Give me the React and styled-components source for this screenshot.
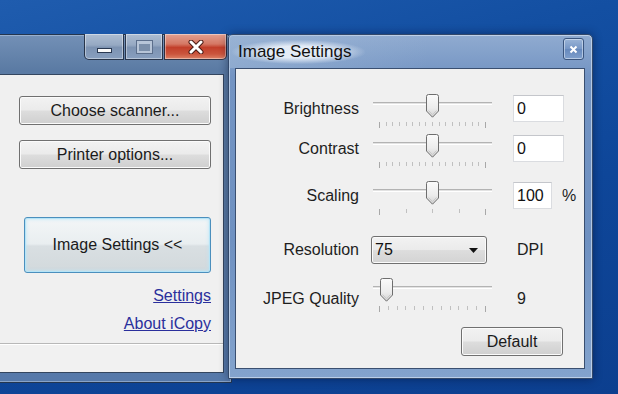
import React from 'react';
import styled, { createGlobalStyle } from 'styled-components';

const GlobalStyle = createGlobalStyle`
  html, body {
    margin: 0;
    padding: 0;
  }
  body {
    width: 618px;
    height: 394px;
    overflow: hidden;
    font-family: "Liberation Sans", Arial, sans-serif;
  }
`;

const Desktop = styled.div`
  position: relative;
  width: 618px;
  height: 394px;
  overflow: hidden;
  background: linear-gradient(165deg, #1f5cae 0%, #134fa2 30%, #0e4699 60%, #0c3f8f 100%);
`;

/* ---------- main iCopy window (partly off screen) ---------- */

const MainWindow = styled.div`
  position: absolute;
  left: -20px;
  top: 34px;
  width: 252px;
  height: 349px;
  box-sizing: border-box;
  display: flex;
  flex-direction: column;
  border: 1px solid #24364f;
  border-radius: 6px 6px 0 0;
  background: linear-gradient(180deg, #7390b6 0%, #5b7ba4 10%, #597aa3 60%, #5679aa 100%);
  box-shadow: inset 0 0 0 1px rgba(200, 215, 235, 0.45);
`;

const MainTitleBar = styled.div`
  height: 39px;
  display: flex;
  justify-content: flex-end;
  align-items: flex-start;
  padding-right: 4px;
`;

const CaptionGroup = styled.div`
  display: flex;
  gap: 1px;
  margin-top: -1px;
`;

const CaptionButton = styled.div`
  width: ${p => p.$w}px;
  height: 26px;
  box-sizing: border-box;
  display: flex;
  align-items: center;
  justify-content: center;
  border: 1px solid rgba(28, 40, 62, 0.9);
  border-top: none;
  border-radius: ${p => p.$radius || '0'};
  box-shadow: inset 0 0 0 1px rgba(255, 255, 255, 0.4);
  background: ${p => p.$close
    ? 'linear-gradient(180deg, #e2a091 0%, #d57864 40%, #c23f2a 54%, #cb553d 80%, #dd8266 100%)'
    : 'linear-gradient(180deg, #adbdd2 0%, #96a9c3 44%, #7d93b2 54%, #889fbf 100%)'};
`;

const MinGlyph = styled.span`
  width: 15px;
  height: 5px;
  box-sizing: border-box;
  margin-top: 7px;
  background: #fafafa;
  border: 1px solid #2a3952;
`;

const MaxGlyph = styled.span`
  width: 15px;
  height: 12px;
  box-sizing: border-box;
  border: 2px solid #b7c5d8;
  border-top-width: 3px;
  background: #7b8faa;
  box-shadow: 0 0 0 1px #5c6f8c;
`;

const MainClient = styled.div`
  flex: 1;
  margin: 0 7px 9px 7px;
  display: flex;
  flex-direction: column;
  background: #f0f0f0;
  border: 1px solid #34465f;
`;

const ButtonPanel = styled.div`
  flex: 1;
  display: flex;
  flex-direction: column;
  align-items: flex-end;
  padding: 21px 12px 0 0;
`;

const WinButton = styled.div`
  width: ${p => p.$w}px;
  height: ${p => p.$h}px;
  margin-top: ${p => p.$mt || 0}px;
  box-sizing: border-box;
  display: flex;
  align-items: center;
  justify-content: center;
  border: 1px solid ${p => (p.$focused ? '#4b8fbd' : '#707070')};
  border-radius: 3px;
  background: ${p => p.$focused
    ? 'linear-gradient(180deg, #f3f6f7 0%, #e9eef0 48%, #d9dfe2 52%, #d2d9dc 100%)'
    : 'linear-gradient(180deg, #f2f2f2 0%, #ebebeb 48%, #dddddd 52%, #cfcfcf 100%)'};
  box-shadow: ${p => p.$focused
    ? 'inset 0 0 0 1px #b5e4f7, inset 0 0 3px 2px rgba(181, 228, 247, 0.55)'
    : 'inset 0 0 0 1px #fbfbfb'};
  font-size: 16px;
  color: #1b1b1b;
`;

const LinkLabel = styled.span`
  margin-top: ${p => p.$mt}px;
  font-size: 16px;
  line-height: 20px;
  color: #2a2f9c;
  text-decoration: underline;
  cursor: pointer;
`;

const StatusStrip = styled.div`
  height: 28px;
  border-top: 1px solid #b8b8b8;
  box-shadow: inset 0 1px 0 #ffffff;
  background: #f1f1f1;
`;

/* ---------- Image Settings tool window ---------- */

const ToolWindow = styled.div`
  position: absolute;
  left: 228px;
  top: 34px;
  width: 365px;
  height: 345px;
  box-sizing: border-box;
  display: flex;
  flex-direction: column;
  border: 1px solid #32486a;
  border-radius: 5px 5px 0 0;
  background: linear-gradient(180deg, #90abd0 0%, #7394c3 12%, #6f91c1 60%, #83a3cd 100%);
  box-shadow: 0 0 10px rgba(0, 10, 40, 0.45), inset 0 0 0 1px rgba(225, 235, 248, 0.6);
`;

const ToolTitleBar = styled.div`
  height: 33px;
  display: flex;
  align-items: center;
  justify-content: space-between;
  padding: 0 8px 0 3px;
  background: linear-gradient(90deg, rgba(160, 185, 215, 0.55), rgba(110, 145, 195, 0) 55%);
`;

const ToolTitle = styled.span`
  padding: 2px 14px 2px 6px;
  font-size: 17px;
  color: #111;
  background: radial-gradient(ellipse at 50% 50%, rgba(232, 239, 248, 0.95) 35%, rgba(232, 239, 248, 0) 72%);
`;

const ToolClose = styled.div`
  width: 21px;
  height: 22px;
  margin-top: -5px;
  box-sizing: border-box;
  display: flex;
  align-items: center;
  justify-content: center;
  border: 1px solid #3b557d;
  border-radius: 3px;
  background: linear-gradient(180deg, #9ab4d7 0%, #7797c6 48%, #6689bd 52%, #7f9fcc 100%);
  box-shadow: inset 0 0 0 1px rgba(230, 238, 250, 0.55);
`;

const ToolClient = styled.div`
  flex: 1;
  margin: 0 7px 9px 6px;
  display: flex;
  flex-direction: column;
  padding-top: 26px;
  background: #f0f0f0;
  border: 1px solid #3a4f70;
`;

const Row = styled.div`
  display: grid;
  grid-template-columns: 135px 142px 1fr;
  align-items: center;
  height: ${p => p.$h || 27}px;
  margin-top: ${p => p.$mt || 0}px;
`;

const Label = styled.span`
  padding-right: 12px;
  text-align: right;
  font-size: 16px;
  color: #1e1e1e;
  white-space: nowrap;
`;

const SliderBox = styled.div`
  position: relative;
  align-self: start;
  width: 123px;
  height: 27px;
  margin-top: ${p => -(p.$lift || 0)}px;
  padding-top: 7px;
  box-sizing: border-box;
`;

const Track = styled.div`
  height: 3px;
  margin: 0 2px;
  box-sizing: border-box;
  border-top: 1px solid #b3b3b3;
  border-bottom: 1px solid #ffffff;
  background: #e2e2e2;
`;

const Ticks = styled.div`
  display: flex;
  justify-content: space-between;
  align-items: flex-start;
  margin-top: 17px;
  padding: 0 8px 0 8px;
`;

const Tick = styled.span`
  width: 1px;
  height: ${p => (p.$end ? 6 : 4)}px;
  background: ${p => (p.$end ? '#a8a8a8' : '#c0c0c0')};
`;

const ThumbMark = styled.svg`
  position: absolute;
  top: -1px;
  display: block;
`;

const ValueCell = styled.div`
  display: flex;
  align-items: center;
`;

const TextBox = styled.div`
  width: ${p => p.$w}px;
  height: 27px;
  box-sizing: border-box;
  padding-left: 3px;
  border: 1px solid #dadce0;
  border-top-color: #c4c6cb;
  background: #ffffff;
  font-size: 16px;
  line-height: 25px;
  color: #111;
`;

const ValueText = styled.span`
  padding-left: ${p => p.$pl || 0}px;
  font-size: 16px;
  color: #1e1e1e;
`;

const Combo = styled.div`
  width: 116px;
  height: 28px;
  box-sizing: border-box;
  display: flex;
  align-items: center;
  justify-content: space-between;
  padding: 0 8px 0 3px;
  border: 1px solid #707070;
  border-radius: 3px;
  background: linear-gradient(180deg, #f2f2f2 0%, #ebebeb 48%, #dddddd 52%, #d3d3d3 100%);
  box-shadow: inset 0 0 0 1px #fbfbfb;
  font-size: 16px;
  color: #111;
`;

const Footer = styled.div`
  display: flex;
  justify-content: flex-end;
  padding-right: 21px;
  margin-top: 15px;
`;

const Thumb = ({ value }) => (
  <ThumbMark style={{ left: 2 + Math.round(value * 106) }} width="13" height="24" viewBox="0 0 13 24">
    <defs>
      <linearGradient id="thumbFill" x1="0" y1="0" x2="0" y2="1">
        <stop offset="0" stopColor="#fbfbfb" />
        <stop offset="0.6" stopColor="#ececec" />
        <stop offset="1" stopColor="#d2d2d2" />
      </linearGradient>
    </defs>
    <path
      d="M0.5 2.5 Q0.5 0.5 2.5 0.5 H10.5 Q12.5 0.5 12.5 2.5 V17 L6.5 23.2 L0.5 17 Z"
      fill="url(#thumbFill)"
      stroke="#6e6e6e"
    />
    <path d="M2.5 16.5 L6.5 20.5 L10.5 16.5" fill="none" stroke="#c9c9c9" />
  </ThumbMark>
);

const Slider = ({ value, ticks, lift }) => (
  <SliderBox $lift={lift}>
    <Track />
    <Ticks>
      {Array.from({ length: ticks }).map((_, i) => (
        <Tick key={'tick-' + i} $end={i === 0 || i === ticks - 1} />
      ))}
    </Ticks>
    <Thumb value={value} />
  </SliderBox>
);

const App = () => {
  return (
    <>
      <GlobalStyle />
      <Desktop>
        <MainWindow>
          <MainTitleBar>
            <CaptionGroup>
              <CaptionButton $w={40} $radius="0 0 0 5px">
                <MinGlyph />
              </CaptionButton>
              <CaptionButton $w={38}>
                <MaxGlyph />
              </CaptionButton>
              <CaptionButton $w={63} $close $radius="0 0 5px 0">
                <svg width="16" height="14" viewBox="0 0 16 14">
                  <path d="M3 2 L13 12 M13 2 L3 12" stroke="#4a1a14" strokeWidth="5" strokeLinecap="round" />
                  <path d="M3 2 L13 12 M13 2 L3 12" stroke="#ffffff" strokeWidth="3" strokeLinecap="round" />
                </svg>
              </CaptionButton>
            </CaptionGroup>
          </MainTitleBar>
          <MainClient>
            <ButtonPanel>
              <WinButton $w={192} $h={29}>Choose scanner...</WinButton>
              <WinButton $w={192} $h={29} $mt={15}>Printer options...</WinButton>
              <WinButton $w={187} $h={56} $mt={48} $focused>Image Settings &lt;&lt;</WinButton>
              <LinkLabel $mt={13}>Settings</LinkLabel>
              <LinkLabel $mt={8}>About iCopy</LinkLabel>
            </ButtonPanel>
            <StatusStrip />
          </MainClient>
        </MainWindow>

        <ToolWindow>
          <ToolTitleBar>
            <ToolTitle>Image Settings</ToolTitle>
            <ToolClose>
              <svg width="9" height="9" viewBox="0 0 9 9">
                <path d="M1.5 1.5 L7.5 7.5 M7.5 1.5 L1.5 7.5" stroke="#ffffff" strokeWidth="2" />
              </svg>
            </ToolClose>
          </ToolTitleBar>
          <ToolClient>
            <Row>
              <Label>Brightness</Label>
              <Slider value={0.5} ticks={17} />
              <ValueCell>
                <TextBox $w={51}>0</TextBox>
              </ValueCell>
            </Row>
            <Row $mt={13}>
              <Label>Contrast</Label>
              <Slider value={0.5} ticks={17} />
              <ValueCell>
                <TextBox $w={51}>0</TextBox>
              </ValueCell>
            </Row>
            <Row $mt={20}>
              <Label>Scaling</Label>
              <Slider value={0.5} ticks={5} />
              <ValueCell>
                <TextBox $w={39}>100</TextBox>
                <ValueText $pl={10}>%</ValueText>
              </ValueCell>
            </Row>
            <Row $mt={27} $h={28}>
              <Label>Resolution</Label>
              <Combo>
                <span>75</span>
                <svg width="9" height="5" viewBox="0 0 9 5">
                  <path d="M0 0 H9 L4.5 5 Z" fill="#111" />
                </svg>
              </Combo>
              <ValueCell>
                <ValueText $pl={4}>DPI</ValueText>
              </ValueCell>
            </Row>
            <Row $mt={21}>
              <Label>JPEG Quality</Label>
              <Slider value={0.07} ticks={13} lift={6} />
              <ValueCell>
                <ValueText $pl={4}>9</ValueText>
              </ValueCell>
            </Row>
            <Footer>
              <WinButton $w={102} $h={29}>Default</WinButton>
            </Footer>
          </ToolClient>
        </ToolWindow>
      </Desktop>
    </>
  );
};

export default App;
